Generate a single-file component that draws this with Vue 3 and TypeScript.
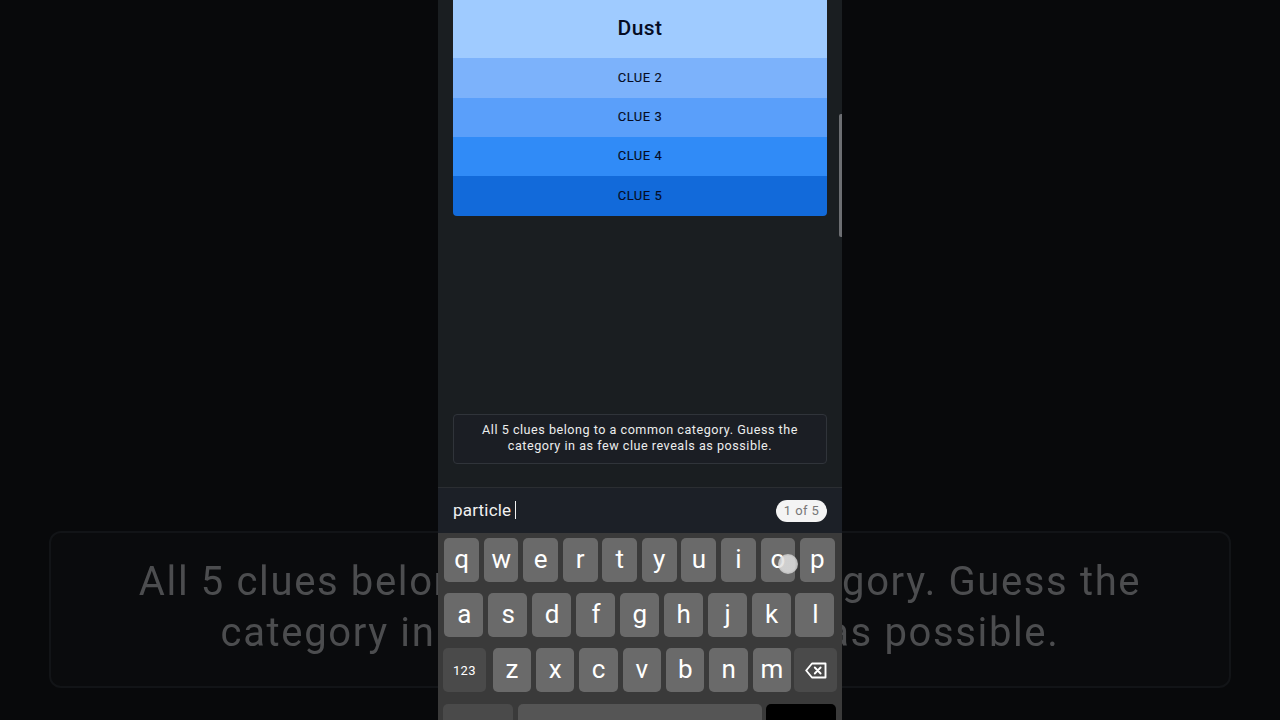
<script setup lang="ts">
const clues = [
  { label: 'CLUE 2', color: '#7cb2fb', height: 40 },
  { label: 'CLUE 3', color: '#5a9ffa', height: 39 },
  { label: 'CLUE 4', color: '#308bf7', height: 39 },
  { label: 'CLUE 5', color: '#126ada', height: 40 },
]
const hintLines = ['All 5 clues belong to a common category. Guess the', 'category in as few clue reveals as possible.']
const rowOne = ['q', 'w', 'e', 'r', 't', 'y', 'u', 'i', 'o', 'p']
const rowTwo = ['a', 's', 'd', 'f', 'g', 'h', 'j', 'k', 'l']
const rowThree = ['z', 'x', 'c', 'v', 'b', 'n', 'm']
</script>

<template>
  <div class="stage">
    <div class="backdrop">
      <div class="backdrop-hint">
        <div v-for="line in hintLines" :key="line">{{ line }}</div>
      </div>
    </div>

    <main class="phone">
      <div class="thumb"></div>
      <section class="board">
        <div class="answer">Dust</div>
        <div
          v-for="clue in clues"
          :key="clue.label"
          class="clue"
          :style="{ background: clue.color, height: clue.height + 'px' }"
        >{{ clue.label }}</div>
      </section>

      <div class="hint">
        <div v-for="line in hintLines" :key="line">{{ line }}</div>
      </div>

      <div class="input-row">
        <div class="input-text">particle<span class="caret"></span></div>
        <div class="badge">1 of 5</div>
      </div>

      <div class="keyboard">
        <div class="touch"></div>
        <div class="row row-one">
          <div v-for="k in rowOne" :key="k" class="key">{{ k }}</div>
        </div>
        <div class="row row-two">
          <div v-for="k in rowTwo" :key="k" class="key">{{ k }}</div>
        </div>
        <div class="row row-three">
          <div class="key fn num">123</div>
          <div class="letters">
            <div v-for="k in rowThree" :key="k" class="key">{{ k }}</div>
          </div>
          <div class="key fn del">
            <svg width="22" height="17" viewBox="0 0 22 17" fill="none" stroke="#fff" stroke-width="1.9" stroke-linejoin="round" stroke-linecap="round">
              <path d="M7 1.500H20.500V15.500H7L1.200 8.500z" />
              <path d="M9.800 5.500l5.800 6M15.600 5.500l-5.800 6" />
            </svg>
          </div>
        </div>
        <div class="row row-four">
          <div class="key fn sym"></div>
          <div class="key space"></div>
          <div class="key enter"></div>
        </div>
      </div>
    </main>
  </div>
</template>

<style>
html, body { margin: 0; background: #08090b; }
</style>

<style scoped>
.stage {
  width: 1280px;
  height: 720px;
  display: grid;
  overflow: hidden;
  background: #08090b;
  font-family: Roboto, "Liberation Sans", sans-serif;
}
.backdrop, .phone { grid-area: 1 / 1; }
.backdrop { padding: 531px 49px 0; box-sizing: border-box; }
.backdrop-hint {
  height: 157px;
  box-sizing: border-box;
  border: 2px solid #121417;
  border-radius: 12px;
  background: #0a0b0d;
  padding: 24px 0 0;
  color: #4c4d4f;
  font-size: 40px;
  line-height: 50.500px;
  letter-spacing: 1.64px;
  text-align: center;
  filter: blur(0.4px);
}
.phone {
  position: relative;
  width: 404px;
  height: 720px;
  margin-left: 438px;
  display: flex;
  flex-direction: column;
  background: #1a1e21;
  overflow: hidden;
}
.thumb {
  position: absolute;
  top: 114px;
  right: 0;
  width: 3px;
  height: 123px;
  border-radius: 2px 0 0 2px;
  background: #6c6e72;
}
.board {
  flex: none;
  margin: 0 15px;
  border-radius: 0 0 4px 4px;
  overflow: hidden;
  color: #050c24;
  text-align: center;
}
.answer {
  height: 58px;
  line-height: 56px;
  background: #9fcbff;
  font-size: 21px;
  font-weight: 500;
  letter-spacing: 0.4px;
}
.clue {
  display: flex;
  align-items: center;
  justify-content: center;
  box-sizing: border-box;
  padding-bottom: 2px;
  font-size: 13px;
  font-weight: 400;
  letter-spacing: 0.5px;
  -webkit-text-stroke: 0.12px #050c24;
}
.hint {
  flex: none;
  margin: 198px 15px 0;
  height: 50px;
  box-sizing: border-box;
  border: 1px solid #30343a;
  border-radius: 4px;
  background: #1b1e24;
  padding-top: 7px;
  color: #eceded;
  font-size: 12.600px;
  line-height: 16px;
  letter-spacing: 0.52px;
  text-align: center;
}
.input-row {
  flex: none;
  margin-top: 23px;
  height: 46px;
  box-sizing: border-box;
  border-top: 1px solid #2b2e32;
  background: #1c2027;
  padding: 0 15px;
  display: flex;
  align-items: center;
  justify-content: space-between;
}
.input-text {
  display: flex;
  align-items: center;
  padding-bottom: 2px;
  color: #f1f1f1;
  font-size: 17px;
  letter-spacing: 0.2px;
}
.caret {
  display: block;
  width: 1px;
  height: 18px;
  margin-left: 4px;
  background: #f1f1f1;
}
.badge {
  width: 51px;
  height: 22px;
  line-height: 22px;
  border-radius: 11px;
  background: #f4f4f4;
  color: #777;
  font-size: 13px;
  letter-spacing: 0.4px;
  text-align: center;
}
.keyboard {
  position: relative;
  flex: none;
  height: 187px;
  background: #3a3a3a;
  padding-top: 5px;
  box-sizing: border-box;
}
.touch {
  position: absolute;
  left: 340px;
  top: 20.500px;
  width: 20px;
  height: 20px;
  border-radius: 50%;
  background: radial-gradient(circle, rgba(225, 225, 225, 0.85) 55%, rgba(190, 190, 190, 0.6) 100%);
}
.row { display: flex; height: 44px; margin-bottom: 11px; }
.row-one { padding: 0 7.300px 0 6.300px; gap: 4.900px; }
.row-two { padding: 0 7.600px 0 6.300px; gap: 4.900px; }
.row-three { padding: 0 4.700px; }
.row-four { padding: 0 5.500px 0 4.700px; gap: 4.500px; margin-top: 12px; }
.letters { flex: 1; display: flex; gap: 5.030px; padding: 0 3px 0 6.700px; }
.key {
  flex: 1;
  display: flex;
  align-items: center;
  justify-content: center;
  border-radius: 5px;
  background: #6a6a6a;
  color: #fff;
  font-size: 26px;
  padding-bottom: 2px;
  box-sizing: border-box;
}
.row-two .key { padding-left: 1px; }
.fn { flex: none; background: #4a4a4a; }
.num { width: 43.300px; font-size: 13px; padding-bottom: 0; letter-spacing: 0.3px; }
.del { width: 43.300px; padding-bottom: 0; }
.sym { width: 70.800px; }
.space { flex: none; width: 244px; background: #555; }
.enter { flex: none; width: 70px; background: #000; }
</style>
